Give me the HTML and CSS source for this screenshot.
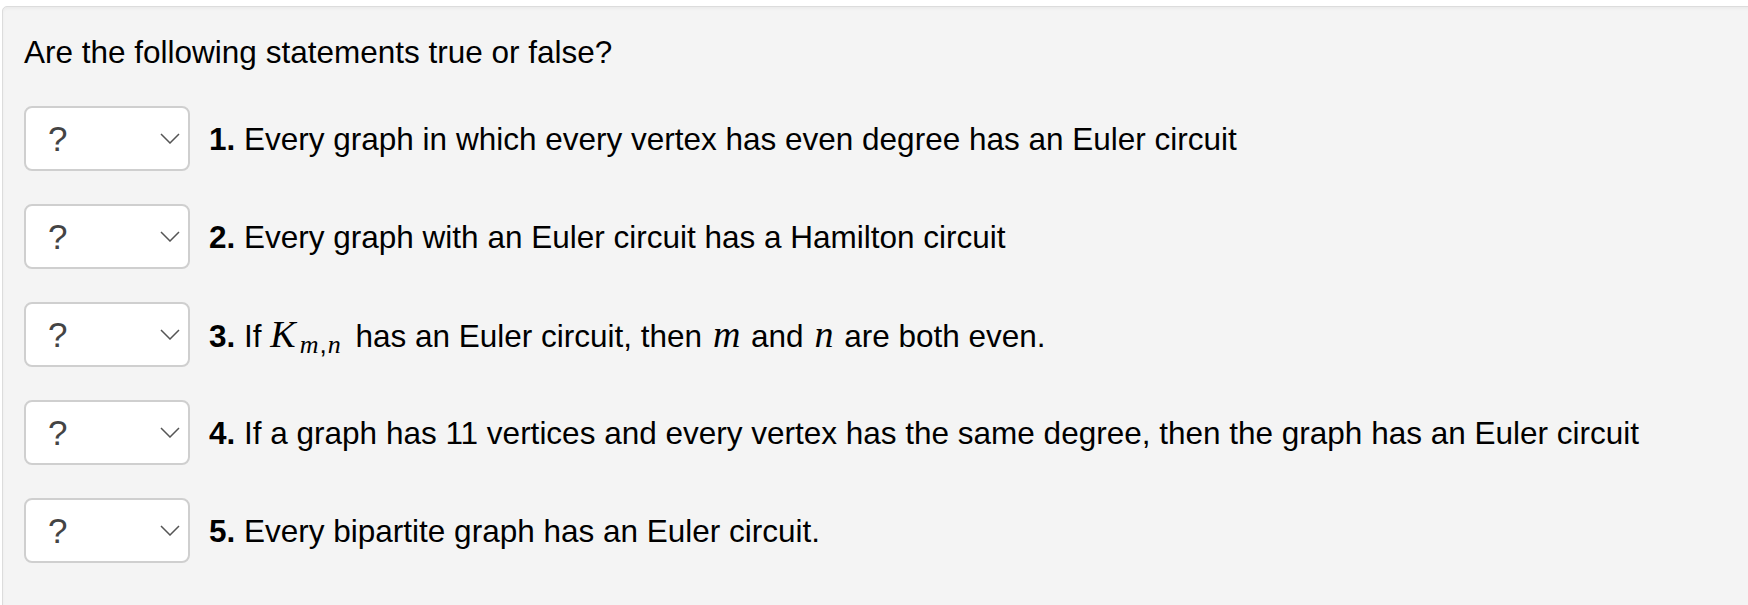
FILE: index.html
```html
<!DOCTYPE html>
<html lang="en">
<head>
<meta charset="utf-8">
<title>True or false</title>
<link rel="stylesheet" href="styles.css">
</head>
<body>
<div class="panel">
  <p class="prompt">Are the following statements true or false?</p>
  <div class="rows">
    <div class="row">
      <div class="pick">
        <select class="select" aria-label="Statement 1"><option>?</option><option>True</option><option>False</option></select>
        <svg class="chev" viewBox="0 0 20 11" aria-hidden="true"><path d="M1 1 L10 10 L19 1"/></svg>
      </div>
      <p class="stmt"><b>1.</b> Every graph in which every vertex has even degree has an Euler circuit</p>
    </div>
    <div class="row">
      <div class="pick">
        <select class="select" aria-label="Statement 2"><option>?</option><option>True</option><option>False</option></select>
        <svg class="chev" viewBox="0 0 20 11" aria-hidden="true"><path d="M1 1 L10 10 L19 1"/></svg>
      </div>
      <p class="stmt"><b>2.</b> Every graph with an Euler circuit has a Hamilton circuit</p>
    </div>
    <div class="row">
      <div class="pick">
        <select class="select" aria-label="Statement 3"><option>?</option><option>True</option><option>False</option></select>
        <svg class="chev" viewBox="0 0 20 11" aria-hidden="true"><path d="M1 1 L10 10 L19 1"/></svg>
      </div>
      <p class="stmt"><b>3.</b> If <span class="math"><i class="mi big">K</i><sub class="msub"><i class="mi">m</i>,<i class="mi">n</i></sub></span> has an Euler circuit, then <i class="mi var">m</i> and <i class="mi var">n</i> are both even.</p>
    </div>
    <div class="row">
      <div class="pick">
        <select class="select" aria-label="Statement 4"><option>?</option><option>True</option><option>False</option></select>
        <svg class="chev" viewBox="0 0 20 11" aria-hidden="true"><path d="M1 1 L10 10 L19 1"/></svg>
      </div>
      <p class="stmt"><b>4.</b> If a graph has 11 vertices and every vertex has the same degree, then the graph has an Euler circuit</p>
    </div>
    <div class="row">
      <div class="pick">
        <select class="select" aria-label="Statement 5"><option>?</option><option>True</option><option>False</option></select>
        <svg class="chev" viewBox="0 0 20 11" aria-hidden="true"><path d="M1 1 L10 10 L19 1"/></svg>
      </div>
      <p class="stmt"><b>5.</b> Every bipartite graph has an Euler circuit.</p>
    </div>
  </div>
</div>
</body>
</html>
```

FILE: styles.css
```css
html, body {
  margin: 0;
  padding: 0;
  background: #ffffff;
  overflow: hidden;
}

body {
  font-family: "Liberation Sans", Arial, sans-serif;
  font-size: 31.5px;
  line-height: 36px;
  color: #000;
}

.panel {
  margin: 6px -20px 0 2px;
  padding: 27px 0 60px 21px;
  background: #f4f4f4;
  border: 1px solid #dcdcdc;
  border-radius: 5px;
  box-shadow: inset 0 2px 3px rgba(0, 0, 0, 0.04);
}

.prompt {
  margin: 0 0 36px 0;
}

.rows {
  display: flex;
  flex-direction: column;
  gap: 33px;
}

.row {
  display: flex;
  align-items: center;
  gap: 19px;
}

.pick {
  position: relative;
  flex: none;
  width: 166px;
  height: 65px;
}

.select {
  appearance: none;
  -webkit-appearance: none;
  box-sizing: border-box;
  width: 100%;
  height: 100%;
  margin: 0;
  padding: 0 0 0 22px;
  border: 2px solid #cfcfcf;
  border-radius: 8px;
  background: #ffffff;
  font-family: "Liberation Sans", Arial, sans-serif;
  font-size: 35px;
  color: #444;
  outline: none;
}

.chev {
  position: absolute;
  right: 10px;
  top: 27px;
  width: 20px;
  height: 11px;
  fill: none;
  stroke: #555;
  stroke-width: 1.5;
  pointer-events: none;
}

.stmt {
  margin: 0;
  white-space: nowrap;
}

.stmt b {
  font-weight: 700;
}

.math {
  white-space: nowrap;
}

.mi {
  font-family: "Liberation Serif", "Times New Roman", serif;
  font-style: italic;
}

.big {
  font-size: 38px;
  margin-right: 4px;
}

.msub {
  font-size: 26px;
  vertical-align: -6px;
  line-height: 0;
  letter-spacing: 1px;
  margin-right: 5px;
}

.var {
  font-size: 38px;
  padding: 0 2px;
}
```
